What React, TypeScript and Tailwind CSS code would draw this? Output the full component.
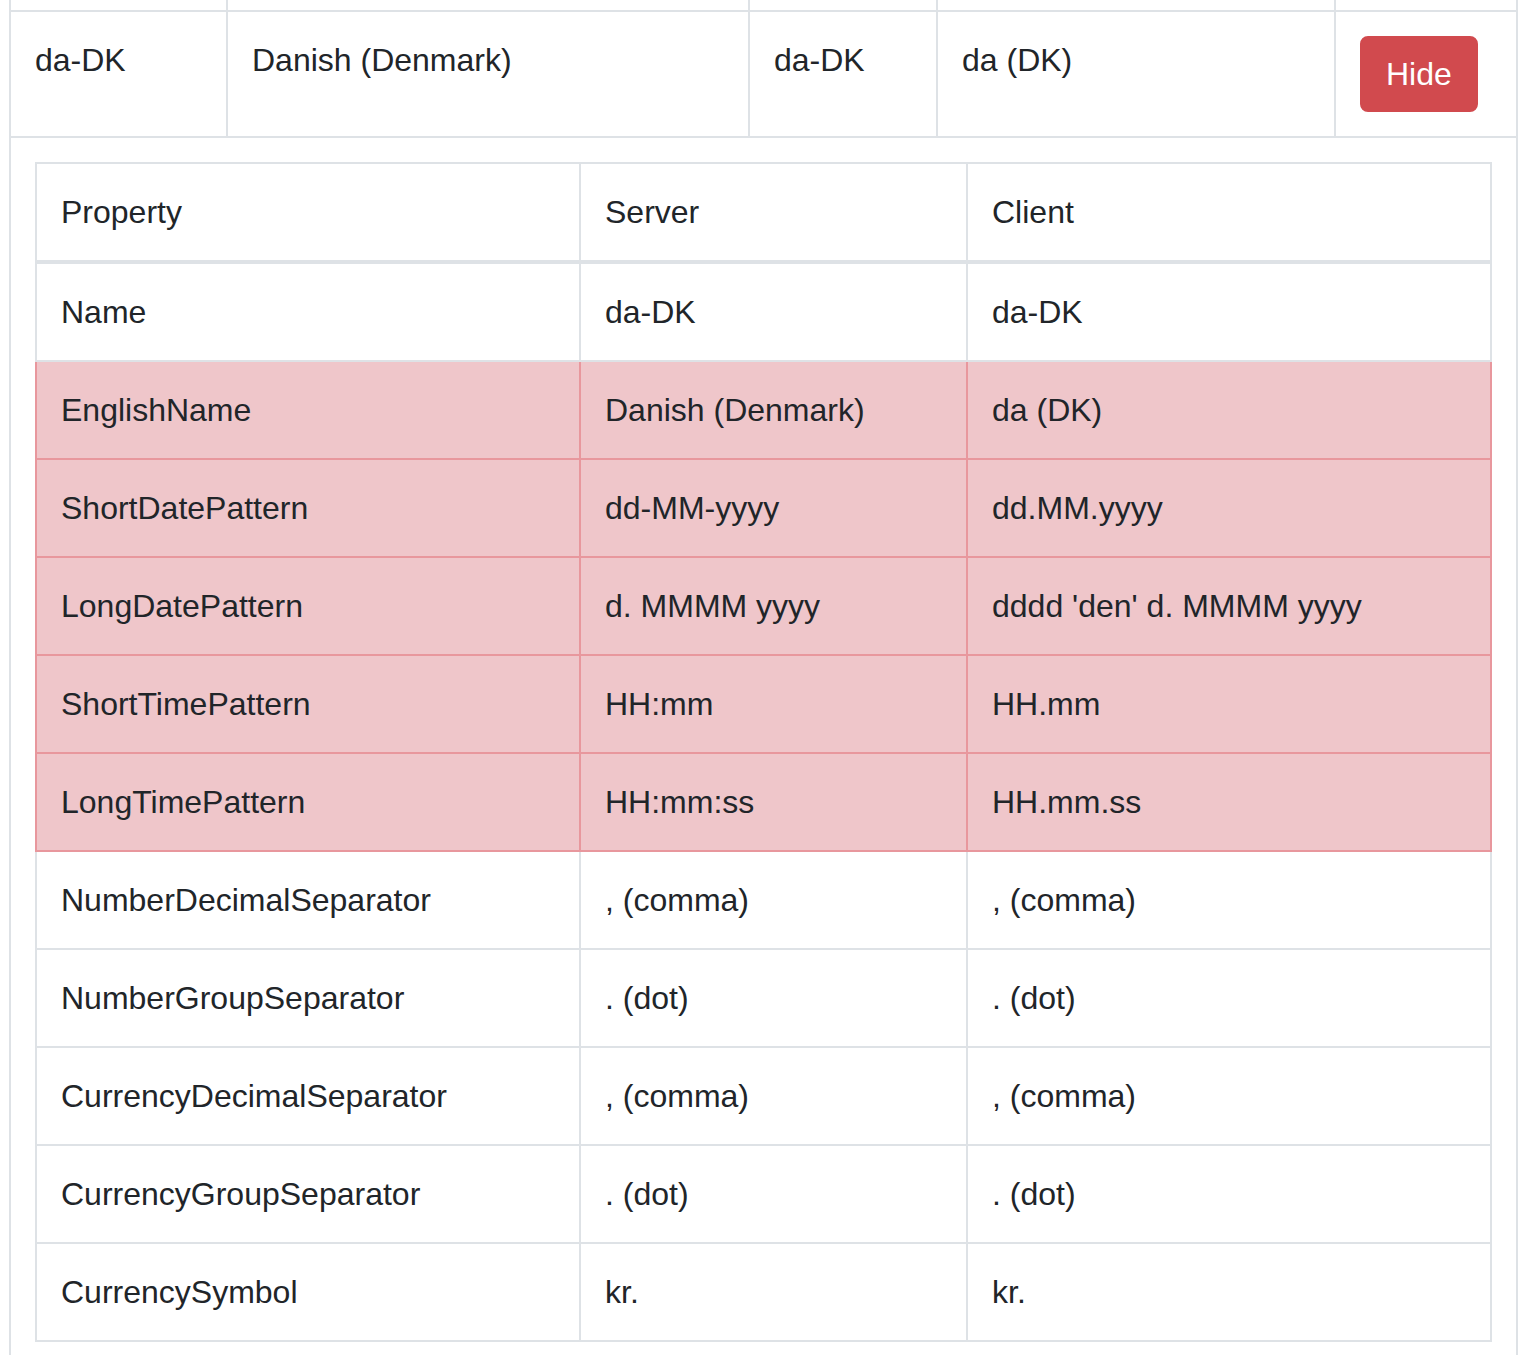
import React from "react";

const rows: { p: string; s: string; c: string; bad?: boolean }[] = [
  { p: "Name", s: "da-DK", c: "da-DK" },
  { p: "EnglishName", s: "Danish (Denmark)", c: "da (DK)", bad: true },
  { p: "ShortDatePattern", s: "dd-MM-yyyy", c: "dd.MM.yyyy", bad: true },
  { p: "LongDatePattern", s: "d. MMMM yyyy", c: "dddd 'den' d. MMMM yyyy", bad: true },
  { p: "ShortTimePattern", s: "HH:mm", c: "HH.mm", bad: true },
  { p: "LongTimePattern", s: "HH:mm:ss", c: "HH.mm.ss", bad: true },
  { p: "NumberDecimalSeparator", s: ", (comma)", c: ", (comma)" },
  { p: "NumberGroupSeparator", s: ". (dot)", c: ". (dot)" },
  { p: "CurrencyDecimalSeparator", s: ", (comma)", c: ", (comma)" },
  { p: "CurrencyGroupSeparator", s: ". (dot)", c: ". (dot)" },
  { p: "CurrencySymbol", s: "kr.", c: "kr." },
];

const cell = "border-2 border-[#dee2e6] p-6 align-top text-left font-normal";
const bad = "border-2 border-[#e8979d] bg-[#efc6ca] p-6 align-top text-left font-normal";

export default function App() {
  return (
    <div
      className="h-[1355px] overflow-hidden bg-white pl-[9px] text-[32px] leading-[48px] text-[#212529]"
      style={{ fontFamily: '"Liberation Sans", Arial, sans-serif' }}
    >
      <table className="-mt-[88px] w-[1507px] table-fixed border-collapse">
        <colgroup>
          <col className="w-[217px]" />
          <col className="w-[522px]" />
          <col className="w-[188px]" />
          <col className="w-[398px]" />
          <col className="w-[182px]" />
        </colgroup>
        <tbody>
          <tr>
            <td className={cell}>&nbsp;</td>
            <td className={cell}></td>
            <td className={cell}></td>
            <td className={cell}></td>
            <td className={cell}></td>
          </tr>
          <tr>
            <td className={cell}>da-DK</td>
            <td className={cell}>Danish (Denmark)</td>
            <td className={cell}>da-DK</td>
            <td className={cell}>da (DK)</td>
            <td className={cell}>
              <button className="rounded-[8px] border-2 border-[#d14a4e] bg-[#d14a4e] px-6 py-3 text-[32px] leading-[48px] text-white">
                Hide
              </button>
            </td>
          </tr>
          <tr>
            <td colSpan={5} className={cell}>
              <table className="w-full table-fixed border-collapse">
                <colgroup>
                  <col className="w-[544px]" />
                  <col className="w-[387px]" />
                  <col />
                </colgroup>
                <thead>
                  <tr>
                    <th className={cell + " border-b-4"}>Property</th>
                    <th className={cell + " border-b-4"}>Server</th>
                    <th className={cell + " border-b-4"}>Client</th>
                  </tr>
                </thead>
                <tbody>
                  {rows.map((r) => (
                    <tr key={r.p}>
                      <td className={r.bad ? bad : cell}>{r.p}</td>
                      <td className={r.bad ? bad : cell}>{r.s}</td>
                      <td className={r.bad ? bad : cell}>{r.c}</td>
                    </tr>
                  ))}
                </tbody>
              </table>
            </td>
          </tr>
        </tbody>
      </table>
    </div>
  );
}
